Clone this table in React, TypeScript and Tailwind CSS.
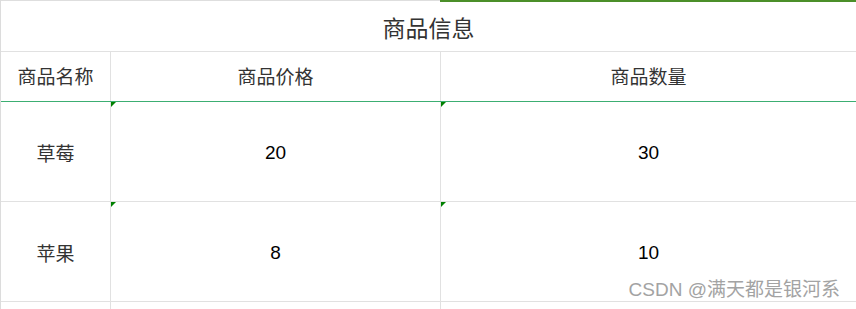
import React from "react";

const cjk = { fontFamily: '"Noto Sans CJK SC", "Noto Sans", sans-serif' };
const arial = { fontFamily: '"Liberation Sans", Arial, sans-serif' };

function Tri() {
  return (
    <div className="absolute left-0 top-0 w-0 h-0 border-t-[5px] border-r-[5px] border-t-[#008000] border-r-transparent" />
  );
}

function DataRow({ name, price, qty }: { name: string; price: string; qty: string }) {
  return (
    <div className="flex h-[100px] border-b border-[#e1e1e1]">
      <div className="w-[109px] pt-[4px] flex items-center justify-center text-[19px] text-[#333]" style={cjk}>
        {name}
      </div>
      <div className="relative w-[330px] pt-[3px] border-l border-[#e1e1e1] flex items-center justify-center text-[19px] text-black" style={arial}>
        <Tri />
        {price}
      </div>
      <div className="relative flex-1 pt-[3px] border-l border-[#e1e1e1] flex items-center justify-center text-[19px] text-black" style={arial}>
        <Tri />
        {qty}
      </div>
    </div>
  );
}

export default function App() {
  return (
    <div className="relative w-[856px] h-[309px] overflow-hidden bg-white border-l border-[#dcdcdc]">
      <div className="flex h-[2px]">
        <div className="w-[439px] border-t border-[#dedede]" />
        <div className="flex-1 bg-[#4b8f29]" />
      </div>
      <div className="h-[50px] pt-[2px] border-b border-[#e1e1e1] flex items-center justify-center text-[23px] text-[#333]" style={cjk}>
        商品信息
      </div>
      <div className="flex h-[50px] border-b border-[#3cae72] text-[19px] text-[#333]" style={cjk}>
        <div className="w-[109px] flex items-center justify-center">商品名称</div>
        <div className="w-[330px] border-l border-[#e1e1e1] flex items-center justify-center">商品价格</div>
        <div className="flex-1 border-l border-[#e1e1e1] flex items-center justify-center">商品数量</div>
      </div>
      <DataRow name="草莓" price="20" qty="30" />
      <DataRow name="苹果" price="8" qty="10" />
      <div className="flex h-[10px]">
        <div className="w-[109px]" />
        <div className="w-[330px] border-l border-[#e1e1e1]" />
        <div className="flex-1 border-l border-[#e1e1e1]" />
      </div>
      <div className="absolute right-[16px] bottom-[10px] text-[19px] leading-none text-[#a3a3a3]" style={{ fontFamily: '"Liberation Sans", "Noto Sans CJK SC", sans-serif' }}>
        CSDN @满天都是银河系
      </div>
    </div>
  );
}
